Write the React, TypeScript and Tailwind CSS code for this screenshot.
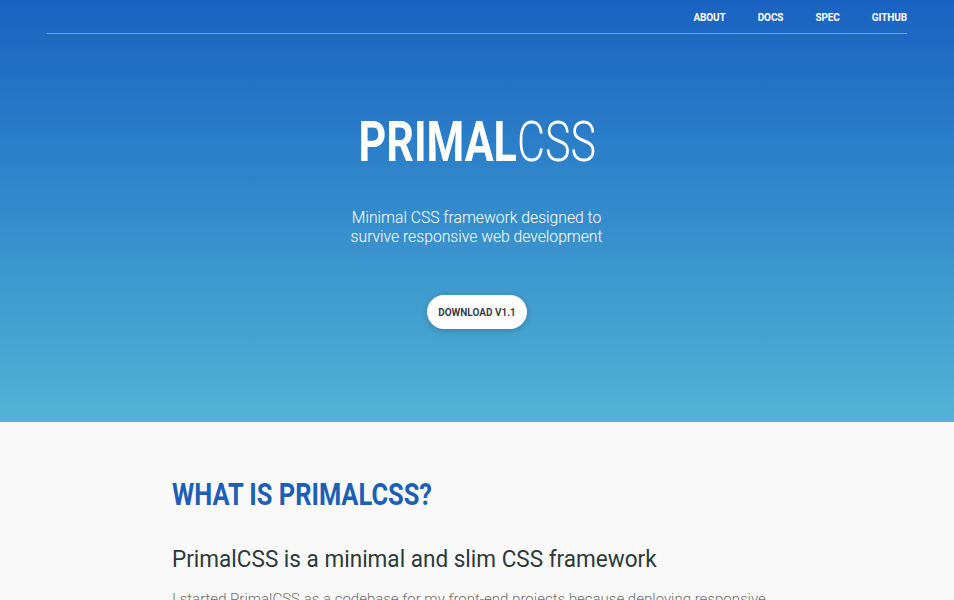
import React from "react";

const NAV = ["About", "Docs", "Spec", "Github"];

export default function App() {
  return (
    <div className="min-h-screen bg-[#f9f9f9] font-['Roboto',sans-serif]">
      {/* Hero */}
      <header className="h-[422px] bg-gradient-to-b from-[#1a62c1] to-[#53b3d4] text-white">
        <nav className="mx-[47px] flex justify-end gap-[32px] border-b border-white/40 pt-[11px] pb-[9px]">
          {NAV.map(n => (
            <a key={n} href="#" className="text-[10px] font-bold uppercase leading-[13px] tracking-[-0.1px]">
              {n}
            </a>
          ))}
        </nav>

        <div className="flex flex-col items-center">
          <h1 className="mt-[80px] text-[56px] leading-[56px]">
            <span className="inline-block origin-center scale-x-[0.77]">
              <span className="font-bold">PRIMAL</span>
              <span className="font-light">CSS</span>
            </span>
          </h1>
          <p className="mt-[38px] text-center text-[16px] font-light leading-[19px]">
            <span className="inline-block origin-center scale-x-[0.98]">
              Minimal CSS framework designed to
              <br />
              survive responsive web development
            </span>
          </p>
          <button className="mt-[49px] h-[34px] w-[100px] rounded-full bg-white text-[10px] font-bold uppercase text-[#3a3f44] shadow-[0_2px_6px_rgba(0,0,0,0.2)]">
            Download v1.1
          </button>
        </div>
      </header>

      {/* About */}
      <main className="mx-auto w-[610px] pt-[53px]">
        <h2 className="text-[31px] font-bold leading-[40px] text-[#1b5fb6]">
          <span className="inline-block origin-left scale-x-[0.82]">WHAT IS PRIMALCSS?</span>
        </h2>
        <h3 className="mt-[30px] text-[23px] leading-[30px] text-[#2d3a3b]">
          <span className="inline-block origin-left scale-x-[0.98] whitespace-nowrap">
            PrimalCSS is a minimal and slim CSS framework
          </span>
        </h3>
        <p className="mt-[12px] text-[15px] font-light leading-[24px] text-[#6f6f6f]">
          I started PrimalCSS as a codebase for my front-end projects because deploying responsive
          websites should be simple, fast and painless.
        </p>
      </main>
    </div>
  );
}
